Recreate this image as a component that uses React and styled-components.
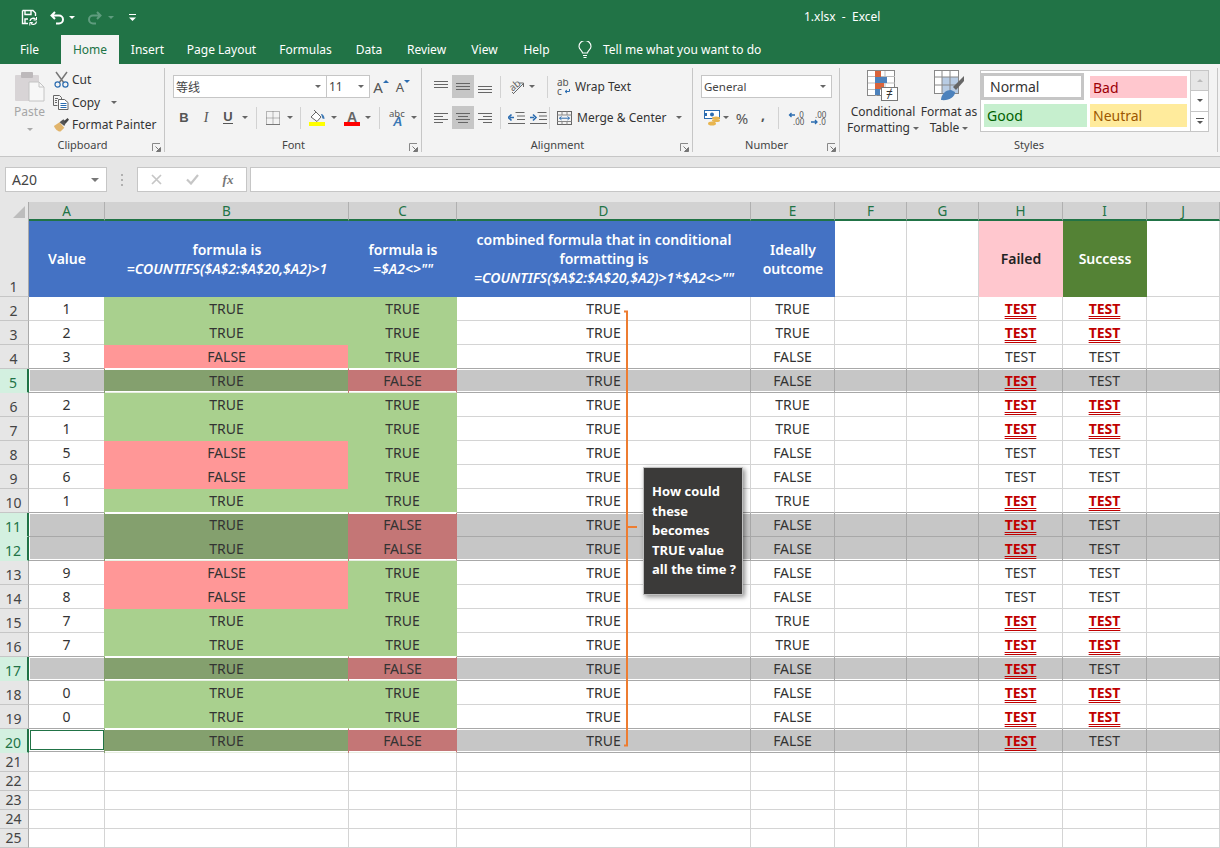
import React from "react";
import styled, { createGlobalStyle } from "styled-components";

const Global = createGlobalStyle`
  html, body { margin: 0; padding: 0; background: #fff; }
  body { width: 1220px; height: 848px; overflow: hidden; font-family: "Noto Sans", "Noto Sans CJK SC", sans-serif; }
`;
const Page = styled.div`position: relative; width: 1220px; height: 848px; overflow: hidden;`;

/* ---------- title + tabs ---------- */
const TitleBar = styled.div`height: 35px; background: #217346; color: #fff; display: flex; align-items: center; position: relative;`;
const Quick = styled.div`display: flex; align-items: center; width: 804px; padding-left: 21px; box-sizing: border-box;`;
const TitleText = styled.div`font-size: 12px; white-space: pre; margin-top: -3px;`;
const TabBar = styled.div`height: 29px; background: #217346; display: flex; align-items: stretch; padding-left: 14px; box-sizing: border-box;`;
const Tab = styled.div`
  width: ${p => p.$w}px; margin-left: ${p => p.$ml || 0}px; display: flex; align-items: center; justify-content: center;
  font-size: 12px; color: ${p => (p.$active ? "#217346" : "#fff")}; background: ${p => (p.$active ? "#f3f3f3" : "transparent")};
  padding-bottom: 1px; box-sizing: border-box;
`;
const TellMe = styled.div`display: flex; align-items: center; gap: 11px; margin-left: 15px; color: #fff; font-size: 12px;`;

/* ---------- ribbon ---------- */
const Ribbon = styled.div`height: 92px; background: #f3f3f3; border-bottom: 1px solid #c6c6c6; display: flex; color: #333; font-size: 11.5px; box-sizing: content-box;`;
const Group = styled.div`width: ${p => p.$w}px; box-sizing: border-box; display: flex; flex-direction: column; position: relative; padding-left: ${p => p.$pl || 0}px;`;
const GroupBody = styled.div`flex: 1; display: flex; min-height: 0; padding-top: ${p => p.$pt ?? 11}px;`;
const GroupLabel = styled.div`height: 20px; line-height: 18px; text-align: center; font-size: 11px; color: #444; flex: none; margin-left: ${p => p.$ml || 0}px;`;
const GroupSep = styled.div`position: absolute; right: 0; top: 4px; bottom: 4px; width: 1px; background: #c6c6c6;`;
const Launcher = styled.svg`position: absolute; right: 4px; bottom: 4px; width: 9px; height: 9px;`;
const Rows = styled.div`display: flex; flex-direction: column; gap: ${p => p.$gap ?? 8}px;`;
const Row = styled.div`display: flex; align-items: center; height: 23px;`;
const Btn = styled.div`
  width: ${p => p.$w}px; height: 23px; display: flex; align-items: center; justify-content: center; flex: none;
  background: ${p => (p.$active ? "#c6c6c6" : "transparent")}; color: #444;
`;
const Sep = styled.div`width: 1px; height: 22px; background: #d2d2d2; margin: 0 ${p => p.$m ?? 4}px; flex: none;`;
const Caret = styled.span`
  display: inline-block; width: 0; height: 0; border-left: 3px solid transparent; border-right: 3px solid transparent;
  border-top: 3px solid ${p => p.$c || "#666"}; flex: none; margin-left: ${p => p.$ml || 0}px; margin-right: ${p => p.$mr || 0}px;
`;
const Select = styled.div`
  width: ${p => p.$w}px; height: 23px; box-sizing: border-box; border: 1px solid #c6c6c6; background: #fff; display: flex; align-items: center;
  justify-content: space-between; padding: 0 5px 0 2px; font-size: ${p => p.$fs || 12}px; color: #444; flex: none;
  margin-left: ${p => p.$ml ?? 0}px;
`;
const PasteCol = styled.div`width: 53px; display: flex; flex-direction: column; align-items: center; color: #a6a6a6; font-size: 12px; padding-left: 6px; box-sizing: border-box; margin-top: -4px;`;
const ClipRows = styled.div`display: flex; flex-direction: column; margin-top: -7px;`;
const ClipRow = styled.div`height: 23.5px; display: flex; align-items: center; gap: 3px; font-size: 12px; color: #333; white-space: nowrap;`;
const ClipIcon = styled.span`width: 16px; display: flex; justify-content: center; flex: none;`;
const GlyphB = styled.span`font: bold 13px "Liberation Sans", sans-serif; color: #555;`;
const GlyphI = styled.span`font: italic 14px "Liberation Serif", serif; color: #555;`;
const GlyphU = styled.span`font: bold 13px "Liberation Sans", sans-serif; color: #555; border-bottom: 1px solid #555; line-height: 12px;`;
const GrowA = styled.span`font: 15px "Noto Sans", sans-serif; color: #555; position: relative; top: 0;`;
const BigBtnRow = styled.div`display: flex; align-items: center; height: 23px; color: #333; font-size: 12px; white-space: nowrap;`;
const StackBtn = styled.div`width: ${p => p.$w}px; display: flex; flex-direction: column; align-items: center; font-size: 12px; line-height: 16px; color: #333; white-space: nowrap; flex: none; margin-right: ${p => p.$mr || 0}px;`;
const StackIcon = styled.div`height: 39px; display: flex; align-items: flex-start;`;
const Gallery = styled.div`
  width: 229px; height: 62px; box-sizing: border-box; border: 1px solid #c6c6c6; background: #fff; display: grid;
  grid-template-columns: 106px 100px 1fr; grid-template-rows: 30px 1fr; margin-left: 3px; position: relative;
`;
const StyleChip = styled.div`
  display: flex; align-items: center; font-size: 14px; padding-left: ${p => p.$normal ? 6 : 3}px; box-sizing: border-box;
  margin: ${p => p.$normal ? "2px 3px 1px 0" : p.$row2 ? "3px 0 4px 3px" : "5px 0 3px 3px"};
  ${p => p.$normal ? "border: 3px solid #c6c6c6;" : ""}
  background: ${p => p.$bg}; color: ${p => p.$fg};
`;
const Scroller = styled.div`grid-column: 3; grid-row: 1 / 3; display: flex; flex-direction: column; margin-left: 3px; margin-top: -1px; margin-bottom: -1px; margin-right: -1px; border: 1px solid #c6c6c6;`;
const ScrollBtn = styled.div`flex: 1; display: flex; align-items: center; justify-content: center; background: ${p => p.$off ? "#e6e6e6" : "#fff"}; & + & { border-top: 1px solid #c6c6c6; }`;

/* ---------- formula bar ---------- */
const FormulaArea = styled.div`height: 45px; background: #e6e6e6; padding-top: 10px; box-sizing: border-box; display: flex; align-items: flex-start;`;
const NameBox = styled.div`
  width: 102px; height: 25px; margin-left: 5px; box-sizing: border-box; border: 1px solid #c6c6c6; background: #fff; display: flex; align-items: center;
  justify-content: space-between; padding: 0 7px 0 6px; font-size: 14px; color: #444;
`;
const Dots = styled.div`width: 30px; height: 25px; display: flex; flex-direction: column; align-items: center; justify-content: center; gap: 3px;`;
const Dot = styled.i`display: block; width: 2px; height: 2px; background: #b0b0b0;`;
const FxBox = styled.div`width: 110px; height: 25px; box-sizing: border-box; border: 1px solid #c6c6c6; background: #fff; display: flex; align-items: center; color: #aaa;`;
const FxBtn = styled.div`width: 36.3px; display: flex; align-items: center; justify-content: center;`;
const FxGlyph = styled.span`font: italic bold 13px "Liberation Serif", serif; color: #777;`;
const FormulaInput = styled.div`flex: 1; height: 25px; margin-left: 3px; box-sizing: border-box; border: 1px solid #c6c6c6; border-right: 0; background: #fff;`;

/* ---------- sheet ---------- */
const Sheet = styled.div`
  display: grid; background: #fff;
  grid-template-columns: 29px 76px 244px 108px 294px 84px 72px 72px 84px 84px 73px;
  grid-template-rows: 19px 76px repeat(19, 24px) repeat(5, 19px);
  font-size: 14px; color: #333; position: relative;
`;
const Corner = styled.div`background: #e6e6e6; position: relative; border-right: 1px solid #aaa; box-sizing: border-box;`;
const ColHead = styled.div`
  background: #d2d2d2; border-right: 1px solid #b0b0b0; border-bottom: 2px solid #217346; box-sizing: border-box; margin-bottom: 0; color: #217346;
  display: flex; align-items: center; justify-content: center; font-size: 13.5px; padding-top: 1px;
`;
const RowHead = styled.div`
  background: ${p => (p.$on ? "#d3f0e0" : "#e6e6e6")}; color: ${p => (p.$on ? "#217346" : "#444")};
  border-right: ${p => (p.$on ? "2px solid #217346" : "1px solid #aaa")}; border-bottom: 1px solid ${p => (p.$on ? "#d3f0e0" : "#c6c6c6")};
  box-sizing: border-box; display: flex; align-items: flex-end; justify-content: center; font-size: 14px; line-height: 19px; padding-right: 1px;
`;
const Cell = styled.div`
  box-sizing: border-box; display: flex; align-items: center; justify-content: center; background: ${p => p.$bg || "#fff"};
  border-right: 1px solid ${p => p.$rl || "#d4d4d4"}; border-bottom: 1px solid ${p => p.$bl || "#d4d4d4"}; 
  ${p => p.$shadow ? `box-shadow: ${p.$shadow};` : ""}
  color: ${p => p.$fg || "#333"}; padding-bottom: 1px; white-space: nowrap;
`;
const SelCell = styled.div`
  box-sizing: border-box; height: 23px; background: #fff; border-bottom: 1px solid #a8a8a8; padding: 1px; 
  &::after { content: ""; display: block; height: 100%; box-sizing: border-box; border: 1px solid #217346; }
`;
const HeadCell = styled.div`
  box-sizing: border-box; background: ${p => p.$bg}; color: ${p => p.$fg || "#fff"}; display: flex; flex-direction: column; align-items: center; justify-content: center;
  font-weight: 600; font-size: 14px; line-height: 19px; text-align: center; padding-bottom: 1px;
`;
const Formula = styled.span`font-style: italic; font-weight: 600; white-space: nowrap;`;
const Bad = styled.span`
  color: #c00000; font-weight: 700; text-decoration: underline double; text-underline-offset: 2px; text-decoration-thickness: 1px;
`;
const Bracket = styled.svg`position: absolute; left: 620px; top: 307px; width: 24px; height: 442px; pointer-events: none;`;
const Callout = styled.div`
  position: absolute; left: 643px; top: 467px; width: 100px; height: 128px; box-sizing: border-box; background: #3b3a39; border: 1px solid #bfbfbf;
  box-shadow: 2px 2px 5px rgba(0,0,0,.45); color: #fff; font: 700 13px/19.6px "Open Sans", sans-serif; padding: 14px 0 0 8px; white-space: pre-line;
`;

/* ---------- icons ---------- */
const Ln = ({ rows, w = 16, h = 14, c = "#666" }) => (
  <svg width={w} height={h} viewBox={`0 0 ${w} ${h}`}>
    {rows.map(([a, b, y], i) => <line key={i} x1={a} x2={b} y1={y + .5} y2={y + .5} stroke={c} />)}
  </svg>
);
const SaveIcon = () => (
  <svg width="17" height="17" viewBox="0 0 17 17" fill="none" stroke="#fff" strokeWidth="1.4">
    <path d="M1.5 1.5h10.5l2.5 2.5v3M1.5 1.5v13h5.5" />
    <path d="M4 1.5v4h6v-4M4 14v-4h3" />
    <path d="M9 12a3.2 3.2 0 0 1 5.6-1.6M15.5 12.5a3.2 3.2 0 0 1-5.6 1.8" strokeWidth="1.3" />
    <path d="M15.5 8v3h-3M8.8 16.5v-3h3" strokeWidth="1" />
  </svg>
);
const Undo = ({ c = "#fff", flip }) => (
  <svg width="15" height="14" viewBox="0 0 15 14" fill="none" stroke={c} strokeWidth="2" style={flip ? { transform: "scaleX(-1)" } : undefined}>
    <path d="M1.5 4.5h7.5a4 4 0 0 1 0 8H6M5 1L1.5 4.5 5 8" />
  </svg>
);
const Customize = () => (
  <svg width="7" height="8" viewBox="0 0 7 8"><rect x="0" y="0" width="7" height="1" fill="#fff" /><path d="M0 3.5h7L3.5 7z" fill="#fff" /></svg>
);
const Bulb = () => (
  <svg width="14" height="18" viewBox="0 0 14 18" fill="none" stroke="#fff" strokeWidth="1.1">
    <path d="M4.5 12c0-2.5-3.5-3.5-3.5-6.5a6 6 0 0 1 12 0c0 3-3.5 4-3.5 6.5z" /><path d="M5 14.5h4M5.5 16.5h3" />
  </svg>
);
const PasteIcon = () => (
  <svg width="31" height="31" viewBox="0 0 31 31">
    <rect x="1" y="4" width="24" height="26" rx="1" fill="#d8d4d6" />
    <rect x="7" y="1" width="12" height="6" rx="1" fill="#bdb9bb" />
    <path d="M15 11h10l5 5v14H15z" fill="#f7f7f7" stroke="#c4c4c4" />
    <path d="M25 11v5h5" fill="none" stroke="#c4c4c4" />
  </svg>
);
const CutIcon = () => (
  <svg width="15" height="17" viewBox="0 0 15 17" fill="none">
    <path d="M2 1l8 11M13 1L5 12" stroke="#777" strokeWidth="1.5" />
    <circle cx="3.6" cy="13.5" r="2.6" stroke="#2b6cb0" strokeWidth="1.2" />
    <circle cx="11.4" cy="13.5" r="2.6" stroke="#2b6cb0" strokeWidth="1.2" />
  </svg>
);
const CopyIcon = () => (
  <svg width="16" height="15" viewBox="0 0 16 15" fill="none" stroke="#666">
    <path d="M.5 .5h6l2 2v2M.5 .5v10h4" /><path d="M5.5 4.5h6l3.5 3v7h-9.500z" fill="#fff" />
    <path d="M2 3.500h3M2 5.500h2M2 7.500h2" /><path d="M7.500 8.500h6M7.500 10.500h6M7.500 12.500h6" stroke="#2b6cb0" />
  </svg>
);
const PainterIcon = () => (
  <svg width="17" height="16" viewBox="0 0 17 16">
    <path d="M1 9l6-4 5 6-4 4c-3 0-6-3-7-6z" fill="#e1b46b" />
    <path d="M7 5l4-3 3 3-2 4z" fill="#555" /><path d="M11.500 4l4-3.500 1.500 2-3.500 4z" fill="#444" />
  </svg>
);
const BorderIcon = () => (
  <svg width="14" height="14" viewBox="0 0 14 14" stroke="#777" strokeDasharray="1 1" fill="none">
    <rect x=".5" y=".5" width="13" height="13" /><path d="M7 .5v13M.5 7h13" /><path d="M0 13.500h14" strokeDasharray="none" />
  </svg>
);
const FillIcon = () => (
  <svg width="17" height="17" viewBox="0 0 17 17">
    <path d="M2 8l5-5 5 5-4 4.500z" fill="#fff" stroke="#666" /><path d="M5 1l2 2" stroke="#666" />
    <path d="M12 5c2 0 3.500 2 3.500 5l-2-.5" fill="#3b78b5" /><rect x="0" y="13" width="16" height="4" fill="#ffff00" />
  </svg>
);
const ColorA = () => (
  <svg width="16" height="16" viewBox="0 0 16 16">
    <text x="8" y="11.500" textAnchor="middle" fontSize="14" fontWeight="700" fontFamily="Liberation Sans" fill="#666">A</text>
    <rect x="0" y="12" width="16" height="4" fill="#ff0000" />
  </svg>
);
const AbcIcon = () => (
  <svg width="16" height="18" viewBox="0 0 16 18">
    <text x="0" y="7.500" fontSize="9.500" fontFamily="Noto Sans" fill="#555">abc</text>
    <text x="4" y="17" fontSize="13" fontWeight="700" fontStyle="italic" fontFamily="Liberation Sans" fill="#3b78b5">A</text>
  </svg>
);
const Orient = () => (
  <svg width="16" height="16" viewBox="0 0 16 16" fill="none">
    <text x="1" y="10" fontSize="10" fontFamily="Noto Sans" fill="#666" transform="rotate(-40 6 8)">ab</text>
    <path d="M5 14L14 5M10.500 4h4v4M3 13l2 2" stroke="#666" />
  </svg>
);
const IndentIcon = ({ right }) => (
  <svg width="17" height="14" viewBox="0 0 17 14">
    <path d="M7.500 1.500h9M9 5h8M9 8.500h8M0 12.500h17" stroke="#666" />
    <path d={right ? "M0 6.500h4M3 3.500l3 3-3 3" : "M6 6.500H2M3.500 3.500l-3 3 3 3"} fill="none" stroke="#2b6cb0" strokeWidth="1.600" />
  </svg>
);
const WrapIcon = () => (
  <svg width="14" height="16" viewBox="0 0 14 16">
    <text x="0" y="7" fontSize="10" fontFamily="Noto Sans" fill="#555">ab</text>
    <text x="0" y="15.500" fontSize="10" fontFamily="Noto Sans" fill="#555">c</text>
    <path d="M12.500 10v2.500H8M10 11l-2 1.500 2 1.500" fill="none" stroke="#2b6cb0" />
  </svg>
);
const MergeIcon = () => (
  <svg width="15" height="14" viewBox="0 0 15 14" fill="none">
    <rect x=".5" y=".5" width="14" height="13" stroke="#666" />
    <path d="M.5 4h14M.5 10.500h14M5 .5V4M10 .5V4M5 10.500v3M10 10.500v3" stroke="#888" />
    <path d="M2.500 7.200h10M4.500 5.500l-2 1.700 2 1.700M10.500 5.500l2 1.700-2 1.700" stroke="#2b6cb0" />
  </svg>
);
const CurrencyIcon = () => (
  <svg width="17" height="16" viewBox="0 0 17 16">
    <rect x=".5" y=".5" width="15" height="8" fill="#fff" stroke="#2b6cb0" /><circle cx="8" cy="4.500" r="2" fill="#2b6cb0" />
    <rect x="0" y="3" width="3" height="3" fill="#2b6cb0" />
    <ellipse cx="12" cy="8" rx="4" ry="1.500" fill="#e8b54f" /><ellipse cx="12" cy="10.500" rx="4" ry="1.500" fill="#e8b54f" /><ellipse cx="8" cy="13.500" rx="4" ry="2" fill="#e8b54f" />
  </svg>
);
const DecIcon = ({ up }) => (
  <svg width="18" height="14" viewBox="0 0 18 14">
    <text x={up ? 9 : 5} y="6.500" fontSize="8" fontFamily="Noto Sans" fill="#555">{up ? ".0" : ".00"}</text>
    <text x={up ? 5 : 9} y="13.500" fontSize="8" fontFamily="Noto Sans" fill="#555">{up ? ".00" : ".0"}</text>
    <path d={up ? "M7 4H1.500M3.500 2L1.500 4l2 2" : "M1 11h6M5 9l2 2-2 2"} fill="none" stroke="#2b6cb0" strokeWidth="1.300" />
  </svg>
);
const CondIcon = () => (
  <svg width="32" height="32" viewBox="0 0 32 32">
    <rect x=".5" y=".5" width="27" height="25" fill="#fff" stroke="#888" />
    <path d="M9 1v25M18 1v25M1 6.500h27M1 13h27M1 19.500h27" stroke="#bbb" />
    <rect x="8" y="1" width="6" height="6" fill="#d9633b" /><rect x="8" y="7" width="12" height="6" fill="#4d82bc" />
    <rect x="8" y="13" width="9" height="6" fill="#d9633b" /><rect x="8" y="19" width="5" height="6" fill="#4d82bc" />
    <rect x="14.500" y="17.500" width="16" height="13" fill="#fff" stroke="#777" />
    <text x="22.500" y="28" textAnchor="middle" fontSize="12" fontFamily="Noto Sans" fill="#333">≠</text>
  </svg>
);
const TableIcon = () => (
  <svg width="31" height="32" viewBox="0 0 31 32">
    <rect x=".5" y=".5" width="24" height="23" fill="#fff" stroke="#888" />
    <rect x="8" y="7" width="16" height="16" fill="#b8cce4" />
    <path d="M8 1v23M16 1v23M1 7h24M1 15h24" stroke="#888" />
    <path d="M19 17l9-9 2-2v5l-8 9z" fill="#666" /><path d="M7 30c0-5 4-10 10-10l4 2c0 5-6 9-14 8z" fill="#4d82bc" />
  </svg>
);
const LauncherIcon = () => (
  <Launcher viewBox="0 0 9 9"><path d="M.5 8V.5H8" fill="none" stroke="#888" /><path d="M3.500 3.500L7 7M8.500 4.500v4h-4z" stroke="#777" fill="#777" /></Launcher>
);

/* ---------- data ---------- */
const colL = ["A", "B", "C", "D", "E", "F", "G", "H", "I", "J"];
const A = ["1", "2", "3", "", "2", "1", "5", "6", "1", "", "", "9", "8", "7", "7", "", "0", "0", ""];
const B = "TTFTTTFFTTTFFTTTTTT";
const E = "TTFFTTFFTFFFFTTFFFF";
const H = "YYNYYYNNYYYNNYYYYYY";
const I = "YYNNYYNNYNNNNYYNYYN";
const blank = A.map(v => v === "");
const word = v => (v ? "TRUE" : "FALSE");

function DataRow({ i }) {
  const n = i + 2;
  const g = blank[i];
  const prev = i > 0 && blank[i - 1];
  const next = i < 18 && blank[i + 1];
  const dark = "#a8a8a8";
  const edge = [];
  if (g && !prev) edge.push("inset 0 1px 0 #fff");
  if (g && !next) edge.push("inset 0 -1px 0 #fff");
  const shadow = edge.join(",");
  const bottomPlain = g || next ? dark : "#d4d4d4";
  const fillCell = (col, val) => {
    const fill = g ? (val ? "#84a06e" : "#c47676") : (val ? "#a9d08e" : "#ff9797");
    const nextFill = next ? dark : fill;
    const side = `-1px 0 0 ${fill}`;
    return (
      <Cell key={col} $bg={fill} $rl={fill} $bl={g ? (next ? fill : "#e8efe2") : (next ? "#fff" : nextFill)} $shadow={[side, shadow].filter(Boolean).join(",")}>
        {word(val)}
      </Cell>
    );
  };
  const plain = (col, text, redFlag) => (
    <Cell key={col} $bg={g ? "#c6c6c6" : "#fff"} $rl={g ? dark : "#d4d4d4"} $bl={bottomPlain} $shadow={shadow}>
      {redFlag ? <Bad>{text}</Bad> : text}
    </Cell>
  );
  return (
    <>
      <RowHead $on={g}>{n}</RowHead>
      {n === 20 ? <SelCell key="A" /> : (
        <Cell key="A" $bg={g ? "#c6c6c6" : "#fff"} $rl={g ? dark : "#d4d4d4"} $bl={bottomPlain} $shadow={[shadow, g ? "inset 1px 0 0 #fff" : ""].filter(Boolean).join(",")}>{A[i]}</Cell>
      )}
      {fillCell("B", B[i] === "T")}
      {fillCell("C", !g)}
      {plain("D", "TRUE")}
      {plain("E", word(E[i] === "T"))}
      {plain("F", "")}
      {plain("G", "")}
      {plain("H", "TEST", H[i] === "Y")}
      {plain("I", "TEST", I[i] === "Y")}
      {plain("J", "")}
    </>
  );
}

const tabs = [["Insert", 57], ["Page Layout", 91], ["Formulas", 77], ["Data", 50], ["Review", 65], ["View", 51], ["Help", 53]];

export default function App() {
  return (
    <Page>
      <Global />
      <TitleBar>
        <Quick>
          <SaveIcon />
          <span style={{ width: 12 }} />
          <Undo />
          <Caret $c="#fff" $ml={4} />
          <span style={{ width: 12 }} />
          <Undo c="#5f9c7e" flip />
          <Caret $c="#5f9c7e" $ml={6} />
          <span style={{ width: 15 }} />
          <Customize />
        </Quick>
        <TitleText>{"1.xlsx  -  Excel"}</TitleText>
      </TitleBar>
      <TabBar>
        <Tab $w={31}>File</Tab>
        <Tab $w={58} $ml={16} $active>Home</Tab>
        {tabs.map(([t, w]) => <Tab key={t} $w={w}>{t}</Tab>)}
        <TellMe><Bulb /><span>Tell me what you want to do</span></TellMe>
      </TabBar>

      <Ribbon>
        <Group $w={165}>
          <GroupBody>
            <PasteCol>
              <PasteIcon />
              <span style={{ marginTop: 2, lineHeight: "16px" }}>Paste</span>
              <Caret $c="#aaa" style={{ marginTop: 8 }} />
            </PasteCol>
            <ClipRows>
              <ClipRow><ClipIcon><CutIcon /></ClipIcon>Cut</ClipRow>
              <ClipRow><ClipIcon><CopyIcon /></ClipIcon>Copy<Caret $ml={8} /></ClipRow>
              <ClipRow><ClipIcon><PainterIcon /></ClipIcon>Format Painter</ClipRow>
            </ClipRows>
          </GroupBody>
          <GroupLabel>Clipboard</GroupLabel>
          <LauncherIcon />
          <GroupSep />
        </Group>

        <Group $w={257} $pl={8}>
          <GroupBody>
            <Rows>
              <Row>
                <Select $w={154} $fs={12}><span>等线</span><Caret /></Select>
                <Select $w={43} $fs={12} style={{ borderLeft: 0 }}><span>11</span><Caret /></Select>
                <Btn $w={22}><GrowA>A</GrowA><Caret $c="#2b6cb0" style={{ transform: "rotate(180deg)", marginTop: -10 }} /></Btn>
                <Btn $w={22}><GrowA style={{ fontSize: 13 }}>A</GrowA><Caret $c="#2b6cb0" style={{ marginTop: -10 }} /></Btn>
              </Row>
              <Row>
                <Btn $w={22} style={{ marginLeft: 0 }}><GlyphB>B</GlyphB></Btn>
                <Btn $w={22}><GlyphI>I</GlyphI></Btn>
                <Btn $w={22}><GlyphU>U</GlyphU></Btn>
                <Caret $ml={3} $mr={3} />
                <Sep $m={5} />
                <Btn $w={22}><BorderIcon /></Btn>
                <Caret $ml={3} />
                <Sep $m={7} />
                <Btn $w={18}><FillIcon /></Btn>
                <Caret $ml={5} />
                <Btn $w={24} style={{ marginLeft: 3 }}><ColorA /></Btn>
                <Caret $ml={1} />
                <Sep $m={8} />
                <Btn $w={18}><AbcIcon /></Btn>
                <Caret $ml={5} />
              </Row>
            </Rows>
          </GroupBody>
          <GroupLabel $ml={-8}>Font</GroupLabel>
          <LauncherIcon />
          <GroupSep />
        </Group>

        <Group $w={271} $pl={8}>
          <GroupBody>
            <Rows>
              <Row>
                <Btn $w={22}><Ln rows={[[1, 15, 1], [1, 15, 4], [1, 15, 7]]} /></Btn>
                <Btn $w={22} $active><Ln rows={[[1, 15, 3], [1, 15, 6], [1, 15, 9]]} /></Btn>
                <Btn $w={22}><Ln rows={[[1, 15, 6], [1, 15, 9], [1, 15, 12]]} /></Btn>
                <Sep $m={4} />
                <Btn $w={24}><Orient /></Btn>
                <Caret $ml={0} />
                <span style={{ width: 12 }} />
                <Sep $m={0} />
              </Row>
              <Row>
                <Btn $w={22}><Ln rows={[[1, 15, 2], [1, 10, 5], [1, 15, 8], [1, 10, 11]]} /></Btn>
                <Btn $w={22} $active><Ln rows={[[1, 15, 2], [3, 13, 5], [1, 15, 8], [3, 13, 11]]} /></Btn>
                <Btn $w={22}><Ln rows={[[1, 15, 2], [6, 15, 5], [1, 15, 8], [6, 15, 11]]} /></Btn>
                <Sep $m={4} />
                <Btn $w={22}><IndentIcon /></Btn>
                <Btn $w={22}><IndentIcon right /></Btn>
                <Sep $m={0} />
              </Row>
            </Rows>
            <Rows style={{ marginLeft: 7 }}>
              <BigBtnRow><WrapIcon /><span style={{ marginLeft: 4 }}>Wrap Text</span></BigBtnRow>
              <BigBtnRow><MergeIcon /><span style={{ marginLeft: 5 }}>Merge &amp; Center</span><Caret $ml={9} /></BigBtnRow>
            </Rows>
          </GroupBody>
          <GroupLabel $ml={-8}>Alignment</GroupLabel>
          <LauncherIcon />
          <GroupSep />
        </Group>

        <Group $w={147} $pl={8}>
          <GroupBody>
            <Rows>
              <Select $w={131} $fs={11.5}><span>General</span><Caret /></Select>
              <Row>
                <Btn $w={22}><CurrencyIcon /></Btn>
                <Caret $ml={0} />
                <Btn $w={26}><span style={{ fontSize: 15, color: "#555" }}>%</span></Btn>
                <Btn $w={16}><span style={{ fontWeight: 700, fontSize: 14, color: "#555", marginTop: -6 }}>,</span></Btn>
                <Sep $m={7} />
                <Btn $w={22}><DecIcon up /></Btn>
                <Btn $w={22}><DecIcon /></Btn>
              </Row>
            </Rows>
          </GroupBody>
          <GroupLabel $ml={-8}>Number</GroupLabel>
          <LauncherIcon />
          <GroupSep />
        </Group>

        <Group $w={378} $pl={10}>
          <GroupBody $pt={6}>
            <StackBtn $w={66}>
              <StackIcon><CondIcon /></StackIcon>
              <span>Conditional</span>
              <span>Formatting<Caret $ml={3} style={{ verticalAlign: "middle" }} /></span>
            </StackBtn>
            <StackBtn $w={56} $mr={0} style={{ marginLeft: 5 }}>
              <StackIcon><TableIcon /></StackIcon>
              <span>Format as</span>
              <span>Table<Caret $ml={3} style={{ verticalAlign: "middle" }} /></span>
            </StackBtn>
            <Gallery>
              <StyleChip $normal $bg="#fff" $fg="#333">Normal</StyleChip>
              <StyleChip $bg="#ffc7ce" $fg="#9c0006">Bad</StyleChip>
              <StyleChip $row2 $bg="#c6efce" $fg="#006100">Good</StyleChip>
              <StyleChip $row2 $bg="#ffeb9c" $fg="#9c5700">Neutral</StyleChip>
              <Scroller>
                <ScrollBtn $off><Caret $c="#bbb" style={{ transform: "rotate(180deg)" }} /></ScrollBtn>
                <ScrollBtn><Caret $c="#555" /></ScrollBtn>
                <ScrollBtn style={{ flexDirection: "column", gap: 2 }}><Dash /><Caret $c="#555" /></ScrollBtn>
              </Scroller>
            </Gallery>
          </GroupBody>
          <GroupLabel $ml={-10}>Styles</GroupLabel>
          <GroupSep />
        </Group>
      </Ribbon>

      <FormulaArea>
        <NameBox><span>A20</span><Caret $c="#777" style={{ borderLeftWidth: 4, borderRightWidth: 4, borderTopWidth: 4 }} /></NameBox>
        <Dots><Dot /><Dot /><Dot /></Dots>
        <FxBox>
          <FxBtn><svg width="11" height="11" viewBox="0 0 11 11" stroke="#c6c6c6" strokeWidth="1.700"><path d="M1 1l9 9M10 1l-9 9" /></svg></FxBtn>
          <FxBtn><svg width="13" height="11" viewBox="0 0 13 11" fill="none" stroke="#c6c6c6" strokeWidth="2.200"><path d="M1 5.500l4 4L12 1" /></svg></FxBtn>
          <FxBtn><FxGlyph>fx</FxGlyph></FxBtn>
        </FxBox>
        <FormulaInput />
      </FormulaArea>

      <Sheet>
        <Corner><svg width="12" height="12" viewBox="0 0 12 12" style={{ position: "absolute", right: 3, bottom: 3 }}><path d="M12 0v12H0z" fill="#bdbdbd" /></svg></Corner>
        {colL.map(c => <ColHead key={c}>{c}</ColHead>)}

        <RowHead>1</RowHead>
        <HeadCell $bg="#4472c4">Value</HeadCell>
        <HeadCell $bg="#4472c4"><span>formula is</span><Formula>=COUNTIFS($A$2:$A$20,$A2)&gt;1</Formula></HeadCell>
        <HeadCell $bg="#4472c4"><span>formula is</span><Formula>=$A2&lt;&gt;""</Formula></HeadCell>
        <HeadCell $bg="#4472c4"><span>combined formula that in conditional</span><span>formatting is</span><Formula>=COUNTIFS($A$2:$A$20,$A2)&gt;1*$A2&lt;&gt;""</Formula></HeadCell>
        <HeadCell $bg="#4472c4"><span>Ideally</span><span>outcome</span></HeadCell>
        <Cell />
        <Cell />
        <HeadCell $bg="#ffc7ce" $fg="#222">Failed</HeadCell>
        <HeadCell $bg="#548235">Success</HeadCell>
        <Cell />

        {A.map((_, i) => <DataRow key={i} i={i} />)}

        {[21, 22, 23, 24, 25].map(n => (
          <React.Fragment key={n}>
            <RowHead>{n}</RowHead>
            {colL.map(c => <Cell key={c} />)}
          </React.Fragment>
        ))}
      </Sheet>

      <Bracket viewBox="0 0 24 442" fill="none" stroke="#ed7d31" strokeWidth="2">
        <path d="M4 4.500h3v434H4M7 220h10" />
      </Bracket>
      <Callout>{"How could\nthese\nbecomes\nTRUE value\nall the time ?"}</Callout>
    </Page>
  );
}

const Dash = styled.i`display: block; width: 8px; height: 1px; background: #555;`;
